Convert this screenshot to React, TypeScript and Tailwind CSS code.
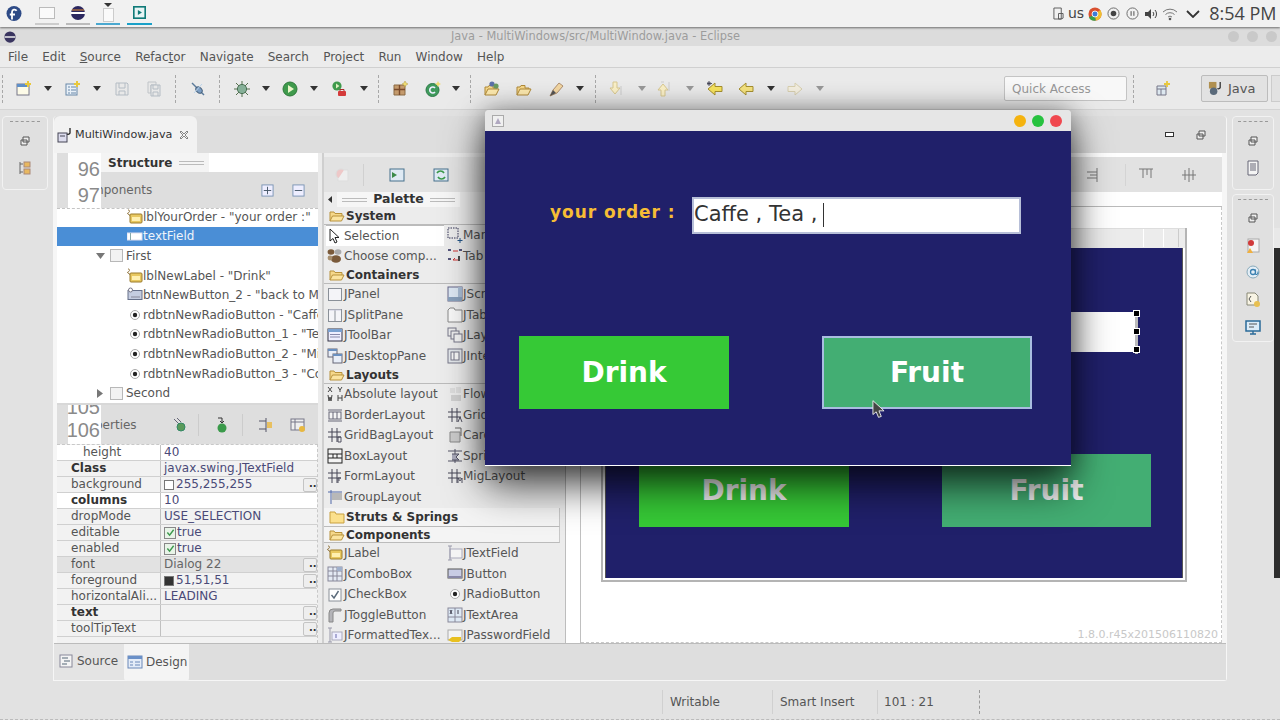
import React from "react";

const S = ({ children, className = "" }: { children: React.ReactNode; className?: string }) => (
  <svg viewBox="0 0 16 16" className={"w-4 h-4 shrink-0 " + className}>{children}</svg>
);
const Arrow = ({ className = "", dim = false }: { className?: string; dim?: boolean }) => (
  <svg viewBox="0 0 8 5" className={"w-2 h-[5px] shrink-0 " + className}><path d="M0 0h8L4 5z" fill={dim ? "#999" : "#333"} /></svg>
);
const Sep = ({ className = "" }: { className?: string }) => (
  <div className={"w-px h-7 border-l border-dashed border-[#a8a8a8] shrink-0 " + className} />
);

const NewWin = ({ className }: { className?: string }) => <S className={className}><rect x="1" y="3" width="12" height="11" fill="#fdfbe8" stroke="#778" /><rect x="1" y="3" width="12" height="3" fill="#5f8fc8" /><path d="M12 0v6M9 3h6" stroke="#e8c83c" strokeWidth="2" /></S>;
const NewFile = ({ className }: { className?: string }) => <S className={className}><rect x="1" y="3" width="11" height="11" fill="#e8f0f8" stroke="#6888a8" /><path d="M3 6h2M3 9h2M3 12h2M6 6h5M6 9h5M6 12h5" stroke="#6888a8" /><path d="M12 0v6M9 3h6" stroke="#e8c83c" strokeWidth="2" /></S>;
const Save = ({ className }: { className?: string }) => <S className={className}><path d="M2 2h11l1 1v11H2z" fill="#e8e8e8" stroke="#b4bcc4" /><path d="M5 2v5h6V2M5 14v-4h6v4" fill="none" stroke="#b4bcc4" /></S>;
const SaveAll = ({ className }: { className?: string }) => <S className={className}><path d="M2 1h8v3H5v8H2z" fill="#e8e8e8" stroke="#c0c4c8" /><path d="M5 4h9v11H5z" fill="#e8e8e8" stroke="#b4bcc4" /><path d="M7 4v4h5V4M7 15v-4h5v4" fill="none" stroke="#b4bcc4" /></S>;
const PinIc = ({ className }: { className?: string }) => <S className={className}><path d="M2 2l12 12" stroke="#5a7a9a" strokeWidth="1.4" /><ellipse cx="9" cy="9" rx="3.6" ry="2.6" transform="rotate(45 9 9)" fill="#7c9ec4" stroke="#45607c" /><path d="M12 3L4 12" stroke="#bcd4ea" /></S>;
const Bug = ({ className }: { className?: string }) => <S className={className}><path d="M8 0v16M0 8h16M2 2l12 12M14 2L2 14" stroke="#56704e" /><circle cx="8" cy="8" r="4.6" fill="#86b098" stroke="#4a7054" /></S>;
const Run = ({ className }: { className?: string }) => <S className={className}><circle cx="8" cy="8" r="7" fill="#3f9a4c" stroke="#2e7a3a" /><path d="M6 4l6 4-6 4z" fill="#eaf6c8" /></S>;
const RunExt = ({ className }: { className?: string }) => <S className={className}><circle cx="6" cy="5" r="4.6" fill="#3f9a4c" /><path d="M5 2.5l3.4 2.5L5 7.5z" fill="#dff0c0" /><rect x="7" y="10" width="8" height="5" rx="1" fill="#d43a3a" /><path d="M9 10V8.5h4V10" fill="none" stroke="#a82a2a" /></S>;
const Pkg = ({ className }: { className?: string }) => <S className={className}><path d="M1 4h11v10H1z" fill="#c49a6c" stroke="#8a6a44" /><path d="M1 8.5h11M6.5 4v10" stroke="#7a4a2a" strokeWidth="1.4" /><path d="M12 0l1 2 2 1-2 1-1 2-1-2-2-1 2-1z" fill="#f0dc70" stroke="#b09a40" strokeWidth=".5" /></S>;
const Cls = ({ className }: { className?: string }) => <S className={className}><circle cx="7.5" cy="9" r="6.5" fill="#3f9a5c" stroke="#2c7a48" /><path d="M10 7a3 3 0 1 0 0 4" fill="none" stroke="#eef" strokeWidth="1.6" /><path d="M13 0l1 2 2 1-2 1-1 2-1-2-2-1 2-1z" fill="#f0dc70" /></S>;
const FolderOpen = ({ className, dots = false }: { className?: string; dots?: boolean }) => <S className={className}><path d="M1 14V6h3l1-1.5h4V7h4v2" fill="#f6d88a" stroke="#b08a3a" /><path d="M1 14l3-6h11l-3 6z" fill="#fbe8ae" stroke="#b08a3a" />{dots ? <><circle cx="8" cy="3" r="2.6" fill="#5c70a8" /><circle cx="12" cy="5" r="2.6" fill="#6a9a60" /></> : null}</S>;
const Pen = ({ className }: { className?: string }) => <S className={className}><path d="M1 15l3-6 6-7 4 3-6 7z" fill="#f3d7a2" stroke="#b09070" /><path d="M1 15l3-6 3 3z" fill="#555" /></S>;
const ArrowDown = ({ className }: { className?: string }) => <S className={className}><path d="M5 1h4v6h3l-5 6-5-6h3z" fill="#faf0c8" stroke="#d8c890" /><path d="M13 5v9" stroke="#ccc" /></S>;
const ArrowUp = ({ className }: { className?: string }) => <S className={className}><path d="M7 3l5 6H9v6H5V9H2z" fill="#faf0c8" stroke="#d8c890" /><path d="M13 1v9M5 1h3" stroke="#ccc" /></S>;
const ArrowL = ({ className, star = false, color = "#f4e27e", line = "#a69030" }: { className?: string; star?: boolean; color?: string; line?: string }) => <S className={className}><path d="M1 8l7-6v3.5h7v5H8V14z" fill={color} stroke={line} />{star ? <path d="M2 0v5M0 2.5h5M.5 1l3 3M3.5 1l-3 3" stroke="#445" strokeWidth=".9" /> : null}</S>;
const ArrowR = ({ className }: { className?: string }) => <S className={className}><path d="M15 8L8 2v3.5H1v5h7V14z" fill="#f4efe0" stroke="#d8d0b0" /></S>;

const LabelIc = () => <S><path d="M1 1c2 0 2 2 0 3s2 1 2 3" fill="none" stroke="#8a6a30" /><rect x="3" y="5" width="12" height="9" rx="1" fill="#e8c860" stroke="#9a7a2a" /><rect x="5" y="8" width="8" height="4" fill="#fff0b0" /></S>;
const FieldIc = () => <S><rect x="0" y="5" width="15" height="7" fill="#fff" stroke="#dde" /><rect x="3" y="5" width="1" height="7" fill="#8aa" /></S>;
const Btn = () => <S><rect x="1" y="3.5" width="14" height="9" fill="#c4cce0" stroke="#66708a" /><circle cx="3.5" cy="3" r="2" fill="#fff" stroke="#778" /><path d="M4 10h9" stroke="#889" /></S>;
const Radio = () => <S><circle cx="8" cy="8" r="4.5" fill="#fff" stroke="#aaa" /><circle cx="8" cy="8" r="2.2" fill="#222" /></S>;
const Cb = () => <span className="w-[13px] h-[13px] border border-[#b8b8b8] bg-[#f2f2f2] shrink-0" />;

const Folder = ({ open = true }: { open?: boolean }) => open ? (
  <S><path d="M1 13V4h4l1 1.5h7V8" fill="#f6d88a" stroke="#b8923c" /><path d="M1 13l2.5-5H15l-2.5 5z" fill="#fbe4a0" stroke="#b8923c" /></S>
) : (
  <S><path d="M1 3h5l1 2h8v9H1z" fill="#fbe08c" stroke="#c8a040" /></S>
);
const Cursor = () => <S><path d="M3 1v12l3-2.5 2 4.5 2-1-2-4.5h4z" fill="#fff" stroke="#222" /></S>;
const Beans = () => <S><ellipse cx="4" cy="4" rx="3.4" ry="2.8" fill="#7a5a3a" /><ellipse cx="11" cy="4" rx="3.4" ry="2.8" fill="#aaa" /><ellipse cx="9" cy="11" rx="5" ry="3.8" fill="#7a5a3a" /><circle cx="3" cy="10" r="2.4" fill="#a89070" /></S>;
const Marquee = () => <S><rect x="1" y="1" width="10" height="10" fill="none" stroke="#335" strokeDasharray="1.5 1" /><path d="M13 11v5M10.5 13.5h5" stroke="#258" /></S>;
const TabOrd = () => <S><path d="M1 2h3M1 11h3M12 2h3" stroke="#225" strokeWidth="1.6" /><path d="M6 3h5M11 12H6l2-2" fill="none" stroke="#c33" /><path d="M12 8v5" stroke="#222" strokeWidth="1.6" /></S>;
const Box = ({ children }: { children?: React.ReactNode }) => <S><rect x="1.5" y="2.5" width="13" height="12" fill="#f4f4f8" stroke="#8a9098" />{children}</S>;
const Panel = () => <Box />;
const Split = () => <Box><path d="M8 3v11" stroke="#8a9098" /><path d="M2 3h12" stroke="#ccd" /></Box>;
const ToolBarI = () => <S><rect x="1" y="2" width="14" height="12" fill="#eef" stroke="#334" /><rect x="1" y="2" width="14" height="3" fill="#7aa0d0" /><path d="M3 7.5h10M3 10h10" stroke="#88a" /></S>;
const Desktop = () => <S><rect x="1" y="1" width="9" height="8" fill="#e8eef8" stroke="#667" /><rect x="1" y="1" width="9" height="2" fill="#6a90c0" /><rect x="6" y="6" width="9" height="9" fill="#e8eef8" stroke="#667" /><rect x="6" y="6" width="9" height="2" fill="#6a90c0" /></S>;
const ScrollI = () => <S><rect x="1" y="1" width="14" height="14" fill="#dde8f4" stroke="#668" /><rect x="11" y="1" width="4" height="14" fill="#a8bcd4" /><rect x="1" y="11" width="14" height="4" fill="#88a0bc" /></S>;
const Tabbed = () => <S><path d="M1 15V3l2-2h4l1 2h7v12z" fill="#f8f8f8" stroke="#888" /></S>;
const Layered = () => <S><rect x="1" y="1" width="8" height="8" fill="#eee" stroke="#778" /><rect x="4" y="4" width="8" height="8" fill="#eee" stroke="#778" /><rect x="7" y="7" width="8" height="8" fill="#f4f4f4" stroke="#778" /></S>;
const Internal = () => <S><rect x="1" y="1" width="14" height="14" fill="#e4e8ec" stroke="#778" /><rect x="4" y="4" width="8" height="8" fill="#f8f8f8" stroke="#778" /><path d="M7 4v8" stroke="#778" /></S>;
const XY = () => <S><path d="M1 1l4 5M5 1L1 6M11 1l2 3 2-3M13 4v2M1 9l1 6 1-4 1 4 1-6M11 9v6M15 9v6M11 12h4" fill="none" stroke="#444" /></S>;
const Flow = () => <S><rect x="3" y="2" width="5" height="5" fill="#ddd" /><rect x="9" y="1" width="5" height="6" fill="#ddd" /><rect x="4" y="9" width="10" height="6" fill="#d0d0d0" /></S>;
const BorderI = () => <S><path d="M1 3h14M1 14h14" stroke="#667" /><rect x="2" y="5" width="12" height="7" fill="#f4f4f4" stroke="#667" /><path d="M6 5v7M10 5v7" stroke="#667" /></S>;
const Grid = ({ l }: { l: string }) => <S><path d="M1 5h13M1 10h13M5 1v14M10 1v14" stroke="#445" /><path d={l} fill="none" stroke="#445" strokeWidth=".9" /></S>;
const Card = () => <S><path d="M3 5h10v10H3z" fill="#ccc" stroke="#888" /><path d="M8 1h6v8" fill="none" stroke="#666" /></S>;
const BoxL = () => <S><rect x="1" y="1" width="14" height="14" fill="#f4f4f4" stroke="#222" /><path d="M1 6h14M1 10h14M6 6v4M10 6v4" stroke="#222" /></S>;
const Spring = () => <S><path d="M1 3h14M1 13h14M8 1v14" stroke="#556" /><path d="M5 6h7L9 9l3 3H5" fill="#aab" stroke="#556" /></S>;
const GroupI = () => <S><path d="M1 3h14M4 1v14" stroke="#5068a8" /><rect x="5" y="4" width="10" height="7" fill="#b8b8b8" /></S>;
const TextF = () => <S><rect x="3" y="4" width="12" height="9" fill="#f4f4f4" stroke="#aab" /><path d="M1 1h4M1 15h4M3 1v14" stroke="#99a" /></S>;
const Combo = () => <S><rect x="1" y="1" width="14" height="14" fill="#e4eaf4" stroke="#889" /><path d="M1 5h14M1 10h14M6 1v14M10 1v14" stroke="#889" /><rect x="10" y="1" width="5" height="4" fill="#a0b0cc" /></S>;
const ButtonI = () => <S><rect x="1" y="3" width="14" height="9" fill="#c8cce4" stroke="#555" /><path d="M1 11h14" stroke="#8888a8" strokeWidth="2" /></S>;
const Check = () => <S><rect x="2" y="3" width="12" height="12" fill="#fff" stroke="#8a9098" /><path d="M4.5 9l2.5 3 4.5-7" fill="none" stroke="#5a6a7a" strokeWidth="1.4" /></S>;
const Toggle = () => <S><path d="M2 15V6a4 4 0 0 1 4-4h8v2H8a2 2 0 0 0-2 2v9z" fill="#b4b4b8" stroke="#888" /></S>;
const TextA = () => <S><rect x="1" y="1" width="14" height="14" fill="#dde8f4" stroke="#889" /><path d="M1 10h14M8 1v14" stroke="#889" /><path d="M3 3l2 4M5 3L3 7M11 3v4" stroke="#445" /></S>;
const Formatted = () => <S><path d="M3 1v14M1 1h4M1 15h4" stroke="#99a" /><rect x="5" y="5" width="10" height="8" fill="#eef" stroke="#aab" /><path d="M9 7v4" stroke="#66a" /></S>;
const Password = () => <S><rect x="1" y="3" width="14" height="10" fill="#f4f4f4" stroke="#aaa" /><path d="M1 13l4-3h9v3l-2 2H5z" fill="#e8c020" /></S>;

const TrimRestore = () => <svg viewBox="0 0 10 10" className="w-[10px] h-[10px] shrink-0"><path d="M3 1h6v5H3zM1 4h6v5H1z" fill="#eee" stroke="#555" /></svg>;

function TopBar() {
  return (
    <div className="relative z-20 h-[27px] shrink-0 bg-[#f1f1f1] shadow-[0_1px_2px_rgba(0,0,0,0.5)] flex items-center pl-[6px] text-[#444]">
      <svg viewBox="0 0 16 16" className="w-[16px] h-[17px] shrink-0"><circle cx="8" cy="8" r="7.5" fill="#2d4a86" /><path d="M6 14V6.5a2.5 2.5 0 0 1 4.6-1.2M3.8 9H9" fill="none" stroke="#fff" strokeWidth="1.8" /></svg>
      <div className="ml-[13px] w-[24px] h-[22px] border-b-2 border-[#ccc] flex items-center justify-center shrink-0"><div className="w-[16px] h-[12px] bg-[#fafafa] border border-[#bbb]" /></div>
      <div className="ml-[7px] w-[24px] h-[22px] border-b-2 border-[#bbb] flex items-center justify-center shrink-0">
        <svg viewBox="0 0 16 16" className="w-4 h-4"><circle cx="8" cy="8" r="7" fill="#2c2860" /><path d="M1 8h14" stroke="#fff" strokeWidth="2" /><path d="M2 5h12" stroke="#e08a30" /></svg>
      </div>
      <div className="ml-[6px] w-[24px] h-[22px] border-b-2 border-[#4aa8d0] flex flex-col items-center shrink-0">
        <svg viewBox="0 0 12 6" className="w-[8px] h-[4px] shrink-0"><path d="M0 0h12L6 6z" fill="#333" /></svg>
        <div className="w-[11px] h-[14px] bg-[#fafafa] border border-[#ccc] mt-[1px]" />
      </div>
      <div className="ml-[7px] w-[25px] h-[22px] border-b-2 border-[#1aa0c8] flex items-center justify-center shrink-0">
        <svg viewBox="0 0 16 16" className="w-[13px] h-[13px]"><rect x="1" y="1" width="14" height="14" fill="#e8f4f4" stroke="#107a78" strokeWidth="2" /><path d="M6 5l5 3-5 3z" fill="#107a78" /></svg>
      </div>
      <div className="ml-auto flex items-center shrink-0 w-[227px] h-full">
        <svg viewBox="0 0 12 14" className="w-[11px] h-[13px] shrink-0"><path d="M1 1h8v12H1zM6 7h5v5l-2 1H6z" fill="none" stroke="#555" /></svg>
        <span className="ml-[4px] text-[14px] text-[#444]">us</span>
        <svg viewBox="0 0 16 16" className="ml-[4px] w-[14px] h-[14px] shrink-0"><circle cx="8" cy="8" r="7.5" fill="#d9502f" /><path d="M8 8L1 12a7.5 7.5 0 0 0 8 3.5z" fill="#3aa04a" /><path d="M8 8l1 7.5A7.5 7.5 0 0 0 14 3.5z" fill="#efc030" /><circle cx="8" cy="8" r="3.4" fill="#3d7cd8" stroke="#fff" /></svg>
        <svg viewBox="0 0 14 14" className="ml-[5px] w-[13px] h-[13px] shrink-0"><circle cx="7" cy="7" r="6" fill="none" stroke="#666" /><circle cx="7" cy="7" r="3" fill="#444" /></svg>
        <svg viewBox="0 0 14 14" className="ml-[6px] w-[13px] h-[13px] shrink-0"><circle cx="7" cy="7" r="6" fill="none" stroke="#666" /><path d="M5.5 4.5v5M8.5 4.5v5" stroke="#444" /></svg>
        <svg viewBox="0 0 14 14" className="ml-[5px] w-[14px] h-[14px] shrink-0"><path d="M1 5h3l3-3v10L4 9H1z" fill="#444" /><path d="M9 5a3 3 0 0 1 0 4M11 3a6 6 0 0 1 0 8" fill="none" stroke="#444" /></svg>
        <svg viewBox="0 0 16 14" className="ml-[4px] w-[16px] h-[14px] shrink-0"><path d="M1 5a10 10 0 0 1 14 0M3.5 7.5a6.5 6.5 0 0 1 9 0M6 10a3 3 0 0 1 4 0" fill="none" stroke="#777" /><circle cx="8" cy="12" r="1.3" fill="#555" /></svg>
        <svg viewBox="0 0 14 8" className="ml-[8px] w-[14px] h-[8px] shrink-0"><path d="M1 1l6 6 6-6" fill="none" stroke="#333" strokeWidth="1.8" /></svg>
        <span className="ml-[9px] text-[18px] text-[#444] whitespace-nowrap font-['Open_Sans',sans-serif]">8:54 PM</span>
      </div>
    </div>
  );
}

function TitleBar() {
  return (
    <div className="relative h-[19px] shrink-0 bg-[#dcdcdc] flex items-center pl-[4px]">
      <svg viewBox="0 0 16 16" className="w-[12px] h-[12px] shrink-0"><circle cx="8" cy="8" r="7.5" fill="#3a3560" /><path d="M1 8h14" stroke="#eee" strokeWidth="2" /></svg>
      <div className="ml-[435px] text-[11.4px] text-[#9c9c9c] whitespace-nowrap">Java - MultiWindows/src/MultiWindow.java - Eclipse</div>
      <div className="ml-auto mr-[3px] flex gap-[8px]">
        <span className="w-[11px] h-[11px] rounded-full bg-[#c9c9c9]" />
        <span className="w-[11px] h-[11px] rounded-full bg-[#c9c9c9]" />
        <span className="w-[11px] h-[11px] rounded-full bg-[#c9c9c9]" />
      </div>
    </div>
  );
}

function MenuBar() {
  return (
    <div className="h-[22px] shrink-0 bg-[#ececec] border-b border-[#d0d0d0] flex items-center gap-[14.2px] pl-[8px] text-[12px] text-[#555]">
      <span>File</span><span>Edit</span><span><u>S</u>ource</span><span>Refac<u>t</u>or</span><span>Navigate</span><span>Search</span><span>Project</span><span>Run</span><span>Window</span><span>Help</span>
    </div>
  );
}

function ToolBar() {
  return (
    <div className="h-[42px] shrink-0 bg-[#eaeaea] border-b border-[#d4d4d4] flex items-center pl-[2px]">
      <Sep />
      <NewWin className="ml-[13px]" /><Arrow className="ml-[12px]" />
      <NewFile className="ml-[13px]" /><Arrow className="ml-[12px]" />
      <Save className="ml-[13px]" /><SaveAll className="ml-[16px]" />
      <Sep className="ml-[13px]" />
      <PinIc className="ml-[14px]" />
      <Sep className="ml-[13px]" />
      <Bug className="ml-[14px]" /><Arrow className="ml-[12px]" />
      <Run className="ml-[12px]" /><Arrow className="ml-[12px]" />
      <RunExt className="ml-[13px]" /><Arrow className="ml-[13px]" />
      <Sep className="ml-[10px]" />
      <Pkg className="ml-[14px]" /><Cls className="ml-[16px]" /><Arrow className="ml-[11px]" />
      <Sep className="ml-[10px]" />
      <FolderOpen className="ml-[13px]" dots /><FolderOpen className="ml-[16px]" />
      <Pen className="ml-[17px]" /><Arrow className="ml-[11px]" />
      <Sep className="ml-[11px]" />
      <ArrowDown className="ml-[12px]" /><Arrow className="ml-[14px]" dim />
      <ArrowUp className="ml-[10px]" /><Arrow className="ml-[14px]" dim />
      <ArrowL className="ml-[13px]" star color="#f6e35e" />
      <ArrowL className="ml-[15px]" /><Arrow className="ml-[13px]" />
      <ArrowR className="ml-[12px]" /><Arrow className="ml-[13px]" dim />
      <div className="ml-[180px] w-[123px] h-[25px] bg-[#f8f8f8] border border-[#c4c4c4] rounded-[2px] flex items-center pl-[7px] pt-[1px] text-[12px] text-[#999] shrink-0">Quick Access</div>
      <Sep className="ml-[6px]" />
      <S className="ml-[21px]"><path d="M2 5h9v9H2z" fill="#dde8f0" stroke="#778" /><path d="M2 8h9M6 8v6" stroke="#778" /><path d="M12 0v6M9 3h6" stroke="#e8c83c" strokeWidth="1.8" /></S>
      <div className="ml-[30px] w-[67px] h-[27px] bg-[#e2e2e2] border border-[#bcbcbc] rounded-[2px] flex items-center pl-[6px] gap-[5px] text-[13px] text-[#555] shrink-0">
        <svg viewBox="0 0 16 16" className="w-[15px] h-[15px] shrink-0"><rect x="1" y="1" width="8" height="7" fill="#b09050" /><circle cx="6" cy="11" r="4" fill="#5a6a7a" /><path d="M13 1v6a2 2 0 0 1-3 1" fill="none" stroke="#333" strokeWidth="1.4" /></svg>
        Java
      </div>
      <div className="ml-[3px] w-[10px] h-[27px] bg-[#e2e2e2] border border-[#ccc] shrink-0" />
    </div>
  );
}

function Trim({ children, className = "" }: { children: React.ReactNode; className?: string }) {
  return (
    <div className={"w-[46px] bg-[#e0e0e0] border border-[#f2f2f2] rounded-[4px] flex flex-col items-center shrink-0 pt-[4px] " + className}>
      <div className="w-[30px] border-t border-dashed border-[#999]" />
      {children}
    </div>
  );
}

const tree = [
  { t: 'lblYourOrder - "your order :"', i: <LabelIc /> },
  { t: "textField", i: <FieldIc />, sel: true },
  { t: "First", head: true, open: true },
  { t: 'lblNewLabel - "Drink"', i: <LabelIc /> },
  { t: 'btnNewButton_2 - "back to Main"', i: <Btn /> },
  { t: 'rdbtnNewRadioButton - "Caffe"', i: <Radio /> },
  { t: 'rdbtnNewRadioButton_1 - "Tea"', i: <Radio /> },
  { t: 'rdbtnNewRadioButton_2 - "Milk"', i: <Radio /> },
  { t: 'rdbtnNewRadioButton_3 - "Coffee"', i: <Radio /> },
  { t: "Second", head: true },
];

function Tree() {
  return (
    <div className="h-[195px] shrink-0 bg-white border-t border-dashed border-[#c4c4c4] overflow-hidden text-[12px] text-[#555]">
      <div className="-mt-[2px]">
        {tree.map((r) => r.head ? (
          <div key={r.t} className="h-[19.6px] flex items-center whitespace-nowrap pl-[38px]">
            <span className="w-[10px] flex justify-center shrink-0">
              {r.open
                ? <svg viewBox="0 0 9 6" className="w-[9px] h-[6px]"><path d="M0 0h9L4.5 6z" fill="#777" /></svg>
                : <svg viewBox="0 0 6 9" className="w-[6px] h-[9px]"><path d="M0 0v9l6-4.5z" fill="#777" /></svg>}
            </span>
            <span className="ml-[5px] flex"><Cb /></span>
            <span className="ml-[3px]">{r.t}</span>
          </div>
        ) : (
          <div key={r.t} className={"h-[19.6px] flex items-center whitespace-nowrap pl-[70px] " + (r.sel ? "bg-[#4a8ed6] text-[#eef4fa]" : "")}>
            {r.i}<span>{r.t}</span>
          </div>
        ))}
      </div>
    </div>
  );
}

const props = [
  { n: "height", v: "40", bg: "bg-white", sub: true },
  { n: "Class", v: "javax.swing.JTextField", b: true, bg: "bg-[#f2f2f2]" },
  { n: "background", v: "255,255,255", swatch: "bg-white", more: true, bg: "bg-[#f2f2f2]" },
  { n: "columns", v: "10", b: true, bg: "bg-white" },
  { n: "dropMode", v: "USE_SELECTION", bg: "bg-[#f2f2f2]" },
  { n: "editable", v: "true", check: true, bg: "bg-[#f2f2f2]" },
  { n: "enabled", v: "true", check: true, bg: "bg-[#f2f2f2]" },
  { n: "font", v: "Dialog 22", more: true, dark: true, bg: "bg-[#e2e2e2]" },
  { n: "foreground", v: "51,51,51", swatch: "bg-[#333333]", more: true, bg: "bg-[#f2f2f2]" },
  { n: "horizontalAli...", v: "LEADING", bg: "bg-[#f2f2f2]" },
  { n: "text", v: "", b: true, more: true, bg: "bg-[#f2f2f2]" },
  { n: "toolTipText", v: "", more: true, bg: "bg-[#f2f2f2]" },
];

function Props() {
  return (
    <div className="flex-1 overflow-hidden bg-[#f2f2f2] border-t border-[#c8c8c8] text-[12px] border-r border-dashed">
      {props.map((p) => (
        <div key={p.n} className={"h-[16px] flex border-b border-[#d0d0d0] " + p.bg}>
          <div className={"w-[104px] shrink-0 border-r border-[#c0c0c0] leading-[15px] whitespace-nowrap " + (p.sub ? "pl-[26px] " : "pl-[14px] ") + (p.b ? "font-bold text-[#333]" : "text-[#555]")}>{p.n}</div>
          <div className={"flex-1 flex items-center pl-[3px] leading-[15px] whitespace-nowrap " + (p.dark ? "text-[#666]" : "text-[#4a4a78]")}>
            {p.swatch ? <span className={"w-[10px] h-[10px] border border-[#777] mr-[2px] shrink-0 " + p.swatch} /> : null}
            {p.check ? <span className="w-[12px] h-[12px] border border-[#888] bg-[#e8f4e8] mr-[1px] shrink-0 flex items-center justify-center"><svg viewBox="0 0 10 10" className="w-[9px] h-[9px]"><path d="M1.5 5l2.5 3 4.5-6" fill="none" stroke="#3e9a4e" strokeWidth="1.6" /></svg></span> : null}
            <span>{p.v}</span>
            {p.more ? <span className="ml-auto w-[14px] h-[14px] bg-[#eeeeee] border border-[#c4c4c4] rounded-[2px] text-[10px] leading-[10px] font-bold text-[#333] pl-[5px] overflow-hidden">..</span> : null}
          </div>
        </div>
      ))}
    </div>
  );
}

const lineNo = "absolute right-[1px] text-[20px] leading-[24px] text-[#8a8a8a] font-['Liberation_Sans',sans-serif]";

function StructureCol() {
  return (
    <div className="w-[261px] shrink-0 flex flex-col overflow-hidden">
      <div className="h-[19px] shrink-0 flex bg-white">
        <div className="w-[11px] bg-[#dedede] shrink-0" />
        <div className="w-[33px] bg-white shrink-0" />
        <div className="w-[108px] shrink-0 bg-[#f4f4f4] flex items-center pl-[7px] text-[12px] font-bold text-[#333]">
          Structure
          <div className="ml-[7px] w-[25px] h-[4px] border-y border-[#bbb]" />
        </div>
      </div>
      <div className="h-[36px] shrink-0 flex items-stretch">
        <div className="w-[11px] bg-[#dedede] shrink-0" />
        <div className="w-[33px] bg-white shrink-0 relative">
          <span className={lineNo + " -top-[15px]"}>96</span>
          <span className={lineNo + " top-[11px]"}>97</span>
        </div>
        <div className="flex-1 bg-[#dedede] flex items-center overflow-hidden text-[12px] text-[#666]">
          <span className="-ml-[9px] w-[59px] shrink-0 whitespace-nowrap">mponents</span>
          <svg viewBox="0 0 14 14" className="ml-[110px] w-[13px] h-[13px] shrink-0"><rect x="1" y="1" width="12" height="12" fill="#eef" stroke="#7a94b4" /><path d="M7 3v8M3 7h8" stroke="#456" /></svg>
          <svg viewBox="0 0 14 14" className="ml-[18px] w-[13px] h-[13px] shrink-0"><rect x="1" y="1" width="12" height="12" fill="#eef" stroke="#7a94b4" /><path d="M3 7h8" stroke="#456" /></svg>
        </div>
      </div>
      <Tree />
      <div className="h-[41px] shrink-0 flex overflow-hidden border-t-2 border-[#d8d8d8]">
        <div className="w-[11px] bg-[#dedede] shrink-0" />
        <div className="w-[33px] bg-white shrink-0 relative">
          <span className={lineNo + " -top-[10px]"}>105</span>
          <span className={lineNo + " top-[13px]"}>106</span>
        </div>
        <div className="flex-1 bg-[#dedede] flex items-center overflow-hidden text-[12px] text-[#666]">
          <span className="-ml-[6px] w-[42px] shrink-0 whitespace-nowrap">perties</span>
          <S className="ml-[35px]"><path d="M2 2l5 5M5 1l4 4" stroke="#667" /><circle cx="9" cy="10" r="4" fill="#5a9a5a" stroke="#386" /></S>
          <div className="ml-[10px] h-[22px] border-l border-[#ccc]" />
          <S className="ml-[15px]"><path d="M8 1v5M6 4l2 2 2-2M4 1h4" fill="none" stroke="#333" /><circle cx="8" cy="11" r="4.5" fill="#3a9a4a" /></S>
          <div className="ml-[12px] h-[22px] border-l border-[#ccc]" />
          <S className="ml-[15px]"><path d="M1 4h7M1 12h7M8 1v14" stroke="#556" /><path d="M9 5h5v6H9z" fill="#e8c060" /></S>
          <S className="ml-[16px]"><rect x="1" y="2" width="13" height="11" fill="#eee" stroke="#778" /><path d="M1 5h13M5 2v11" stroke="#778" /><circle cx="12" cy="12" r="3" fill="#e8b840" /></S>
        </div>
      </div>
      <Props />
    </div>
  );
}

const Section = ({ t, open = true, boxed = false, className = "h-[18px]" }: { t: string; open?: boolean; boxed?: boolean; className?: string }) => (
  <div className={"shrink-0 mr-[5px] flex items-center gap-[1px] pl-[5px] text-[12px] font-bold text-[#333] border-b border-[#bbbbbb] " + (boxed ? "bg-[#f4f4f4] border-r border-r-[#c8c8c8] " : "") + className}>
    <Folder open={open} />
    <span className="whitespace-nowrap">{t}</span>
  </div>
);

const PRow = ({ a, ai, b, bi, active = false }: { a: string; ai: React.ReactNode; b?: string; bi?: React.ReactNode; active?: boolean }) => (
  <div className="h-[20.5px] shrink-0 flex items-center text-[12px] text-[#555] whitespace-nowrap">
    <div className={"w-[118px] h-full ml-[2px] flex items-center pl-[1px] shrink-0 " + (active ? "bg-white border-t border-[#bbb]" : "")}>{ai}<span className="ml-[1px]">{a}</span></div>
    {b ? <div className="flex items-center ml-[3px] shrink-0">{bi}<span>{b}</span></div> : null}
  </div>
);

function Palette() {
  return (
    <div className="w-[243px] shrink-0 border-l-2 border-[#cfcfcf] flex flex-col overflow-hidden bg-[#ececec]">
      <div className="h-[35px] mt-[4px] shrink-0 bg-[#e2e2e2] flex items-center">
        <S className="ml-[9px]"><circle cx="8" cy="7" r="5" fill="#eec8c8" stroke="#ddd" /><path d="M11 3h4v11H5v-2" fill="#eee" stroke="#ddd" /></S>
        <div className="ml-[14px] h-[22px] border-l border-[#d0d0d0]" />
        <S className="ml-[25px]"><rect x="1" y="2" width="14" height="12" fill="#dfeaf4" stroke="#46708c" /><path d="M3 5l5 3-5 3z" fill="#3a8a4a" /></S>
        <S className="ml-[28px]"><rect x="1" y="2" width="14" height="12" fill="#dfeaf4" stroke="#46708c" /><path d="M4 6a4 4 0 0 1 7 0M12 10a4 4 0 0 1-7 0" fill="none" stroke="#3a9a4a" strokeWidth="1.6" /></S>
      </div>
      <div className="h-[15px] shrink-0 flex items-center bg-[#ececec]">
        <svg viewBox="0 0 4 7" className="ml-[4px] w-[4px] h-[7px] shrink-0"><path d="M4 0v7L0 3.5z" fill="#333" /></svg>
        <div className="ml-[5px] w-[123px] h-full bg-[#f6f6f6] flex items-center justify-center gap-[6px] text-[12.5px] font-bold text-[#333]">
          <span className="w-[25px] h-[4px] border-y border-[#bbb]" />Palette<span className="w-[25px] h-[4px] border-y border-[#bbb]" />
        </div>
      </div>
      <Section t="System" />
      <PRow a="Selection" ai={<Cursor />} b="Marquee" bi={<Marquee />} active />
      <PRow a="Choose comp..." ai={<Beans />} b="Tab Order" bi={<TabOrd />} />
      <Section t="Containers" />
      <PRow a="JPanel" ai={<Panel />} b="JScrollPane" bi={<ScrollI />} />
      <PRow a="JSplitPane" ai={<Split />} b="JTabbedPane" bi={<Tabbed />} />
      <PRow a="JToolBar" ai={<ToolBarI />} b="JLayeredPane" bi={<Layered />} />
      <PRow a="JDesktopPane" ai={<Desktop />} b="JInternalFrame" bi={<Internal />} />
      <Section t="Layouts" />
      <PRow a="Absolute layout" ai={<XY />} b="FlowLayout" bi={<Flow />} />
      <PRow a="BorderLayout" ai={<BorderI />} b="GridLayout" bi={<Grid l="M11 15l2-5 2 5" />} />
      <PRow a="GridBagLayout" ai={<Grid l="M11 10v5h3v-5z" />} b="CardLayout" bi={<Card />} />
      <PRow a="BoxLayout" ai={<BoxL />} b="SpringLayout" bi={<Spring />} />
      <PRow a="FormLayout" ai={<Grid l="M11 10v5M11 10h3M11 12h2" />} b="MigLayout" bi={<Grid l="M11 15v-5l2 3 2-3v5" />} />
      <PRow a="GroupLayout" ai={<GroupI />} />
      <Section t="Struts & Springs" open={false} boxed className="h-[19px] mt-[1px]" />
      <Section t="Components" boxed className="h-[16px]" />
      <PRow a="JLabel" ai={<LabelIc />} b="JTextField" bi={<TextF />} />
      <PRow a="JComboBox" ai={<Combo />} b="JButton" bi={<ButtonI />} />
      <PRow a="JCheckBox" ai={<Check />} b="JRadioButton" bi={<Radio />} />
      <PRow a="JToggleButton" ai={<Toggle />} b="JTextArea" bi={<TextA />} />
      <PRow a="JFormattedTex..." ai={<Formatted />} b="JPasswordField" bi={<Password />} />
    </div>
  );
}

const Handle = ({ className }: { className: string }) => <span className={"absolute w-[5px] h-[5px] bg-black border border-white box-content " + className} />;

function Canvas() {
  return (
    <div className="flex-1 flex flex-col bg-white overflow-hidden border-l border-[#bdbdbd]">
      <div className="h-[35px] mt-[4px] shrink-0 bg-[#e2e2e2] flex items-center justify-end pr-[25px]">
        <S><path d="M13 1v14M3 5h10M6 8h7M3 11h10" stroke="#777" /></S>
        <div className="ml-[25px] h-[22px] border-l border-[#d4d4d4]" />
        <S className="ml-[12px]"><path d="M1 2h14M5 2v9M9 2v6M13 2v9" stroke="#777" /></S>
        <S className="ml-[27px]"><path d="M1 8h14M4 3v10M8 1v14M12 3v10" stroke="#777" /></S>
      </div>
      <div className="h-[14px] shrink-0 bg-white" />
      <div className="flex-1 flex border-t border-[#bbbbbb] relative">
        <div className="w-[15px] shrink-0 border-r border-[#c0c0c0]" />
        <div className="flex-1 relative border-r border-dashed border-[#c8c8c8] border-b pl-[20px] pt-[21px]">
          <div className="w-[586px] h-[354px] border-2 border-[#b4b4b4] border-t-0 flex flex-col">
            <div className="h-[20px] shrink-0 bg-[#ececec] border-t border-[#ddd] flex justify-end pr-[6px] gap-[4px]">
              <span className="w-[16px] h-[18px] border-l border-white" />
              <span className="w-[16px] h-[18px] border-l border-white border-r border-r-[#ccc]" />
            </div>
            <div className="flex-1 bg-white px-[2px] pb-[2px]">
              <div className="relative w-full h-full bg-[#20206a] border-l border-r border-[#555]">
                <div className="absolute left-[438px] top-[64px] w-[92px] h-[40px] bg-white" />
                <div className="absolute left-[529px] top-[62px] w-[3px] h-[44px] bg-[#bbb]" />
                <Handle className="left-[527px] top-[62px]" />
                <Handle className="left-[527px] top-[80px]" />
                <Handle className="left-[527px] top-[98px]" />
                <div className="absolute left-[33px] top-[206px] w-[210px] h-[73px] bg-[#36c936] flex items-center justify-center text-[28px] font-bold text-[#f2f2f2]">Drink</div>
                <div className="absolute left-[336px] top-[206px] w-[209px] h-[73px] bg-[#43ae73] flex items-center justify-center text-[28px] font-bold text-[#f2f2f2]">Fruit</div>
              </div>
            </div>
          </div>
          <div className="absolute right-[3px] bottom-[-1px] text-[11px] text-[#c8c8c8] whitespace-nowrap">1.8.0.r45x201506110820</div>
        </div>
      </div>
    </div>
  );
}

function Editor() {
  return (
    <div className="w-[1174px] shrink-0 mx-[5px] mt-[6px] flex flex-col border-b border-r border-[#f6f6f6] h-[565px] rounded-br-[3px] border-l rounded-t-[4px]">
      <div className="h-[37px] shrink-0 flex bg-[#dedede] rounded-t-[4px]">
        <div className="w-[143px] h-full bg-[#f2f2f2] rounded-t-[6px] flex items-center pl-[3px] pt-[1px] text-[11.2px] text-[#333] whitespace-nowrap shrink-0">
          <S><rect x="1" y="6" width="9" height="9" fill="#dde" stroke="#445" /><path d="M3 9h5" stroke="#445" /><path d="M13 1v5a2 2 0 0 1-3 1" fill="none" stroke="#222" strokeWidth="1.3" /></S>
          <span className="ml-[2px]">MultiWindow.java</span>
          <svg viewBox="0 0 10 10" className="ml-[7px] w-[10px] h-[10px] shrink-0"><path d="M2 1l3 3 3-3 1 1-3 3 3 3-1 1-3-3-3 3-1-1 3-3-3-3z" fill="#f4f4f4" stroke="#555" strokeWidth=".7" /></svg>
        </div>
        <div className="ml-auto flex items-center pr-[20px]">
          <span className="w-[9px] h-[5px] border border-[#333] bg-white" />
          <span className="ml-[22px]"><TrimRestore /></span>
        </div>
      </div>
      <div className="flex-1 flex bg-white border-[#f6f6f6] border-l-[3px] border-r-4 min-h-0">
        <StructureCol />
        <div className="w-[4px] shrink-0 bg-[#ececec]" />
        <Palette />
        <Canvas />
      </div>
      <div className="h-[37px] shrink-0 bg-[#dedede] border-t border-[#bbb] flex text-[12px] text-[#555]">
        <div className="w-[70px] h-full flex items-center gap-[3px] pl-[4px] pb-[2px] bg-[#e4e4e4] shrink-0">
          <S><rect x="2" y="2" width="12" height="12" fill="#f4f4f4" stroke="#889" /><path d="M4 5h6M6 8h6M4 11h5" stroke="#567" /></S>Source
        </div>
        <div className="w-[65px] h-[37px] flex items-center gap-[3px] pl-[3px] pb-[2px] bg-[#f4f4f4] rounded-b-[3px] shrink-0">
          <S><rect x="1" y="2" width="14" height="12" fill="#e4ecf8" stroke="#6a88b8" /><rect x="1" y="2" width="14" height="3" fill="#6a90c8" /><path d="M3 8h3M8 8h5M3 11h3M8 11h5" stroke="#6a88b8" /></S>Design
        </div>
      </div>
    </div>
  );
}

function RightTrim() {
  return (
    <div className="flex-1 flex mt-[6px] min-w-0">
      <div className="w-[42px] shrink-0 flex flex-col gap-[4px]">
        <div className="w-[42px] h-[74px] bg-[#e0e0e0] border border-[#f2f2f2] rounded-[4px] flex flex-col items-center pt-[4px]">
          <div className="w-[30px] border-t border-dashed border-[#999]" />
          <span className="mt-[14px] flex"><TrimRestore /></span>
          <S className="mt-[14px]"><path d="M3 1h10v12l-2 2H3z" fill="#f4f4f4" stroke="#667" /><path d="M5 4h6M5 6h6M5 8h6M5 10h6" stroke="#667" /></S>
        </div>
        <div className="w-[42px] h-[148px] bg-[#e0e0e0] border border-[#f2f2f2] rounded-[4px] flex flex-col items-center pt-[4px]">
          <div className="w-[30px] border-t border-dashed border-[#999]" />
          <span className="mt-[13px] flex"><TrimRestore /></span>
          <S className="mt-[15px]"><rect x="3" y="1" width="11" height="13" fill="#f4f4f4" stroke="#aaa" /><circle cx="6" cy="5" r="3" fill="#d03a3a" /><path d="M2 15l3-5 3 5z" fill="#f0b040" /></S>
          <S className="mt-[10px]"><circle cx="8" cy="8" r="6" fill="#e4eef6" stroke="#8ab" /><circle cx="8" cy="8" r="2.5" fill="none" stroke="#3a80b0" strokeWidth="1.3" /><path d="M10.5 5.5v4c0 2 3 1 2.5-2" fill="none" stroke="#3a80b0" strokeWidth="1.1" /></S>
          <S className="mt-[12px]"><path d="M2 1h8l3 3v9H2z" fill="#f8f4e4" stroke="#887" /><path d="M6 4l-2 3 2 3" fill="none" stroke="#555" /><circle cx="12" cy="12" r="3" fill="#e8c050" /></S>
          <S className="mt-[11px]"><rect x="1" y="2" width="14" height="10" fill="#dcecf8" stroke="#2a6a98" strokeWidth="1.5" /><path d="M4 5h8M4 8h5" stroke="#555" /><path d="M5 15h6M8 12v3" stroke="#2a6a98" strokeWidth="1.4" /></S>
        </div>
      </div>
      <div className="flex-1 flex flex-col pt-[112px]">
        <div className="h-[20px] bg-[#e8e8e8]" />
        <div className="h-[330px] bg-[#2d2d2d]" />
      </div>
    </div>
  );
}

function FloatingWindow() {
  return (
    <div className="absolute z-10 left-[485px] top-[110px] w-[586px] h-[356px] flex flex-col rounded-t-[4px] shadow-[0_20px_40px_rgba(0,0,0,0.7),0_0_24px_rgba(0,0,0,0.35)]">
      <div className="h-[21px] shrink-0 bg-[#e6e6e6] rounded-t-[4px] flex items-center pl-[7px]">
        <svg viewBox="0 0 12 12" className="w-[12px] h-[12px] shrink-0"><rect x=".5" y=".5" width="11" height="11" fill="#f0f0f0" stroke="#aaa" /><path d="M3 9l3-6 3 6z" fill="#b0a8c0" /></svg>
        <div className="ml-auto mr-[9px] flex gap-[6px]">
          <span className="w-[12px] h-[12px] rounded-full bg-[#f5b30f]" />
          <span className="w-[12px] h-[12px] rounded-full bg-[#27c23f]" />
          <span className="w-[12px] h-[12px] rounded-full bg-[#f0484f]" />
        </div>
      </div>
      <div className="flex-1 bg-[#20206a] border-b border-white flex flex-col">
        <div className="flex items-center mt-[66px] pl-[65px]">
          <span className="w-[142px] text-[17px] font-bold text-[#f6bd35] whitespace-nowrap tracking-[0.95px] -mt-[6px] shrink-0 font-['DejaVu_Sans',sans-serif]">your order :</span>
          <div className="w-[329px] h-[37px] bg-white border-2 border-[#b7bfd8] flex items-center pb-[1px] text-[21px] text-[#333] whitespace-nowrap shrink-0">
            Caffe , Tea ,<span className="ml-[6px] w-px h-[24px] bg-[#333]" />
          </div>
        </div>
        <div className="flex mt-[102px] pl-[34px] gap-[93px]">
          <div className="w-[210px] h-[73px] bg-[#36c936] flex items-center justify-center text-[28px] font-bold text-white">Drink</div>
          <div className="relative w-[210px] h-[73px] bg-[#43ae73] border-2 border-[#a9bde0] flex items-center justify-center text-[28px] font-bold text-white">
            Fruit
            <svg viewBox="0 0 14 20" className="absolute left-[48px] top-[61px] w-[13px] h-[20px]"><path d="M1 1v15l3.5-3 2.5 6 3-1-2.5-6H13z" fill="#444" stroke="#eee" /></svg>
          </div>
        </div>
      </div>
    </div>
  );
}

export default function App() {
  return (
    <div className="relative w-[1280px] h-[720px] overflow-hidden bg-[#e2e2e2] flex flex-col font-['DejaVu_Sans',sans-serif]">
      <TopBar />
      <TitleBar />
      <MenuBar />
      <ToolBar />
      <div className="flex-1 flex min-h-0 pl-[2px]">
        <Trim className="h-[74px] mt-[6px]">
          <span className="mt-[14px] flex"><TrimRestore /></span>
          <S className="mt-[14px]"><path d="M3 2v12M3 4h3M3 12h3" stroke="#666" /><rect x="7" y="2" width="6" height="5" fill="#e8b860" stroke="#a87" /><rect x="7" y="9" width="6" height="5" fill="#e8b860" stroke="#a87" /></S>
        </Trim>
        <Editor />
        <RightTrim />
      </div>
      <div className="h-[30px] shrink-0 bg-[#e2e2e2] flex items-center text-[12px] text-[#555] border-b border-dashed border-[#bbb] pb-[5px]">
        <div className="ml-[662px] w-[110px] h-full pl-[7px] flex items-center border-l border-[#d0d0d0]">Writable</div>
        <div className="w-[105px] h-full pl-[7px] flex items-center border-l border-[#d0d0d0] whitespace-nowrap">Smart Insert</div>
        <div className="w-[102px] h-full pl-[6px] flex items-center border-l border-[#d0d0d0]">101 : 21</div>
        <div className="h-[24px] border-l border-dashed border-[#999]" />
      </div>
      <FloatingWindow />
    </div>
  );
}
